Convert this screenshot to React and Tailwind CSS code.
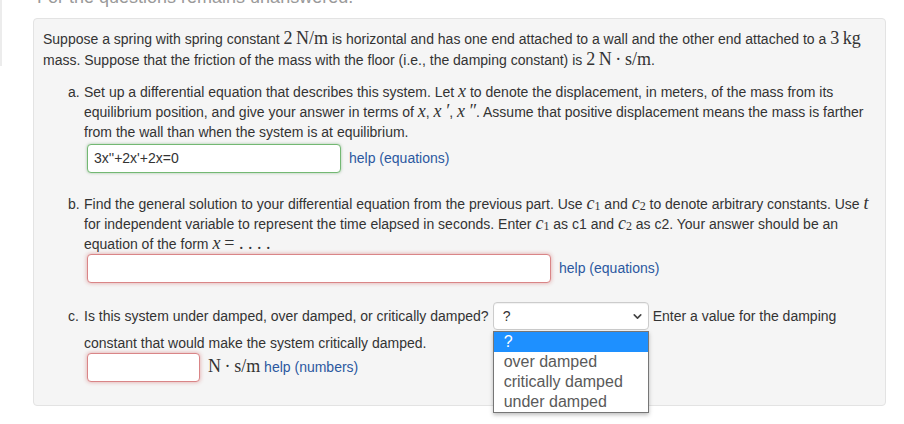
import { ChevronDown } from "lucide-react";

// Math bits rendered in a serif face, roughly like MathJax output.
function M({ children, className = "" }) {
  return (
    <span className={`font-['Liberation_Serif',serif] text-[18px] leading-none ${className}`}>
      {children}
    </span>
  );
}

function V({ children }) {
  return <M className="italic">{children}</M>;
}

function C({ n }) {
  return (
    <M className="italic">
      c<sub className="not-italic text-[12px] relative -bottom-[1px]">{n}</sub>
    </M>
  );
}

function Help({ children }) {
  return <a className="text-[#2b58a0] cursor-pointer">{children}</a>;
}

export default function App() {
  return (
    <div className="relative h-[424px] w-[904px] overflow-hidden bg-white font-['Liberation_Sans',Arial,sans-serif] text-[14px] text-[#333]">
      <div className="absolute left-0 top-0 h-[66px] w-[2px] bg-[#ececec]" />
      <div className="-mt-[14px] h-[22px] pl-[37px] text-[18px] leading-[22px] text-[#9a9a9a]">
        For the questions remains unanswered.
      </div>

      <div className="ml-[33px] mt-[10px] h-[388px] w-[853px] rounded-[4px] border border-[#e3e3e3] bg-[#f5f5f5] pl-[9px] pr-[12px] pt-[10px]">
        <p className="leading-[21px]">
          Suppose a spring with spring constant <M>2&thinsp;N/m</M> is horizontal and has one end attached
          to a wall and the other end attached to a <M>3&thinsp;kg</M> mass. Suppose that the friction of the
          mass with the floor (i.e., the damping constant) is <M>2&thinsp;N&thinsp;·&thinsp;s/m</M>.
        </p>

        {/* part a */}
        <div className="mt-[11px] flex pl-[25px]">
          <span className="w-[16px] shrink-0">a.</span>
          <div className="flex-1">
            <p className="leading-[20px]">
              Set up a differential equation that describes this system. Let <V>x</V> to denote the
              displacement, in meters, of the mass from its equilibrium position, and give your answer in
              terms of <V>x</V>, <V>x&thinsp;′</V>, <V>x&thinsp;″</V>. Assume that positive displacement means the mass is
              farther from the wall than when the system is at equilibrium.
            </p>
            <div className="mt-[2px] flex items-center">
              <div className="ml-[3px] flex h-[29px] w-[254px] items-center rounded-[4px] border border-[#73b873] bg-white pl-[6px] shadow-[0_0_3px_rgba(60,140,60,0.45)]">
                3x''+2x'+2x=0
              </div>
              <span className="ml-[8px]"><Help>help (equations)</Help></span>
            </div>
          </div>
        </div>

        {/* part b */}
        <div className="mt-[21px] flex pl-[25px]">
          <span className="w-[16px] shrink-0">b.</span>
          <div className="flex-1">
            <p className="leading-[20px]">
              Find the general solution to your differential equation from the previous part. Use <C n="1" /> and{" "}
              <C n="2" /> to denote arbitrary constants. Use <V>t</V> for independent variable to represent the
              time elapsed in seconds. Enter <C n="1" /> as c1 and <C n="2" /> as c2. Your answer should be an
              equation of the form <V>x</V> <M>= . . . .</M>
            </p>
            <div className="flex items-center">
              <div className="ml-[3px] h-[29px] w-[464px] rounded-[4px] border border-[#d98587] bg-white shadow-[0_0_4px_rgba(200,60,60,0.45)]" />
              <span className="ml-[8px]"><Help>help (equations)</Help></span>
            </div>
          </div>
        </div>

        {/* part c */}
        <div className="mt-[19px] flex pl-[25px]">
          <span className="mt-[4px] w-[16px] shrink-0">c.</span>
          <div className="flex-1">
            <div className="flex items-center">
              <span>Is this system under damped, over damped, or critically damped?</span>
              <div className="relative ml-[4px]">
                <div className="flex h-[28px] w-[156px] items-center justify-between rounded-[4px] border border-[#cccccc] bg-white pl-[9px] pr-[4px] shadow-[inset_0_1px_1px_rgba(0,0,0,0.06)]">
                  <span>?</span>
                  <ChevronDown size={13} strokeWidth={3} className="text-[#444]" />
                </div>
                <div className="absolute left-0 top-[29px] z-10 w-[156px] border border-[#767676] bg-white text-[16px] leading-[20px] text-[#5a5a5a] shadow-[0_2px_4px_rgba(0,0,0,0.25)]">
                  <div className="bg-[#1e90ff] pl-[10px] text-white">?</div>
                  <div className="pl-[10px]">over damped</div>
                  <div className="pl-[10px]">critically damped</div>
                  <div className="pl-[10px]">under damped</div>
                </div>
              </div>
              <span className="ml-[4px]">Enter a value for the damping</span>
            </div>
            <p className="mt-[3px] leading-[20px]">constant that would make the system critically damped.</p>
            <div className="flex items-center">
              <div className="ml-[3px] h-[29px] w-[113px] rounded-[4px] border border-[#d98587] bg-white shadow-[0_0_4px_rgba(200,60,60,0.45)]" />
              <span className="ml-[8px]">
                <M>N&thinsp;·&thinsp;s/m</M> <Help>help (numbers)</Help>
              </span>
            </div>
          </div>
        </div>
      </div>
    </div>
  );
}
